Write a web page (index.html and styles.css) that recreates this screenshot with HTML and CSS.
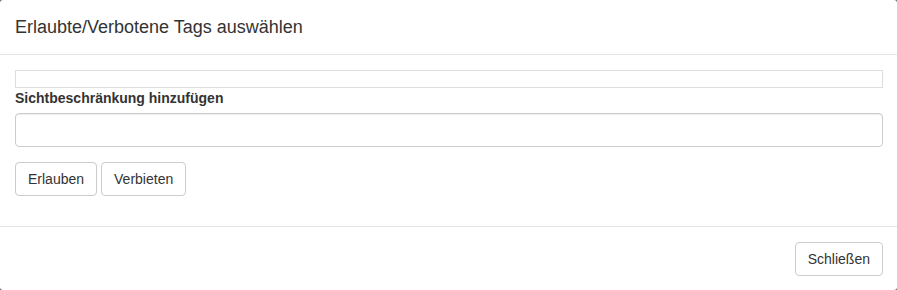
FILE: index.html
```html
<!DOCTYPE html>
<html lang="de">
<head>
<meta charset="utf-8">
<title>Tags</title>
<link rel="stylesheet" href="styles.css">
</head>
<body>
<div class="modal">
  <div class="modal-header">
    <h4 class="modal-title">Erlaubte/Verbotene Tags auswählen</h4>
  </div>
  <div class="modal-body">
    <div class="tag-list"></div>
    <div class="form-group">
      <label class="label" for="restr">Sichtbeschränkung hinzufügen</label>
      <input class="input" id="restr" type="text">
    </div>
    <div class="form-group buttons">
      <button class="btn" type="button">Erlauben</button>
      <button class="btn" type="button">Verbieten</button>
    </div>
  </div>
  <div class="modal-footer">
    <button class="btn" type="button">Schließen</button>
  </div>
</div>
</body>
</html>
```
FILE: styles.css
```css
* { box-sizing: border-box; }
html, body { height: 100%; }
body {
  margin: 0;
  background: #666;
  font-family: "Liberation Sans", Arial, sans-serif;
  font-size: 14px;
  line-height: 20px;
  color: #333;
}
.modal {
  background: #fff;
  border-radius: 3px;
  height: 290px;
  overflow: hidden;
}
.modal-header {
  padding: 15px 14px 15px 15px;
  border-bottom: 1px solid #e5e5e5;
}
.modal-title {
  margin: 0;
  font-size: 18px;
  font-weight: 500;
  line-height: 24px;
  color: #333;
}
.modal-body {
  padding: 15px 14px 15px 15px;
}
.tag-list {
  height: 18px;
  border: 1px solid #ddd;
}
.form-group {
  margin-bottom: 15px;
}
.label {
  display: inline-block;
  margin-bottom: 5px;
  font-weight: bold;
}
.input {
  display: block;
  width: 100%;
  height: 34px;
  padding: 6px 12px;
  border: 1px solid #ccc;
  border-radius: 4px;
  font: inherit;
  color: #555;
  background: #fff;
  box-shadow: inset 0 1px 1px rgba(0,0,0,.075);
  outline: none;
}
.buttons {
  display: flex;
  gap: 4px;
}
.btn {
  display: inline-block;
  height: 34px;
  padding: 6px 12px;
  font: inherit;
  line-height: 20px;
  color: #333;
  background: #fff;
  border: 1px solid #ccc;
  border-radius: 4px;
  cursor: pointer;
}
.modal-footer {
  padding: 15px 14px 15px 15px;
  border-top: 1px solid #e5e5e5;
  display: flex;
  justify-content: flex-end;
}
```
